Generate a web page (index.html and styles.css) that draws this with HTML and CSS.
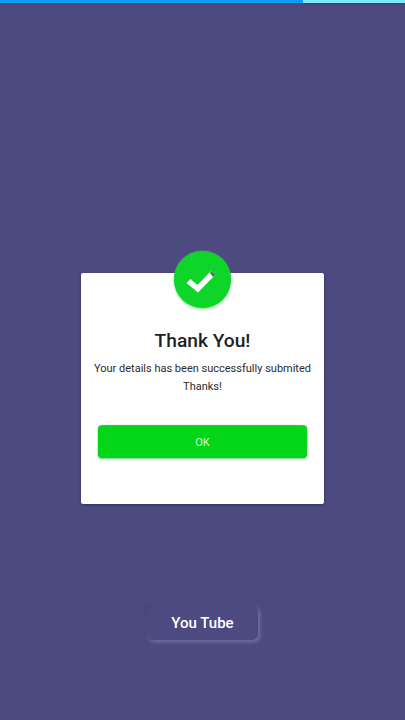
FILE: index.html
```html
<!DOCTYPE html>
<html lang="en">
<head>
<meta charset="utf-8">
<title>Thank You</title>
<link rel="stylesheet" href="styles.css">
</head>
<body>
<div class="progress"><div class="progress-fill"></div></div>
<main class="stage">
  <section class="card">
    <div class="badge">
      <svg class="check" viewBox="0 0 30 24" width="30" height="24" aria-hidden="true">
        <path d="M0.5 13 L4.5 9 L11.5 15 L25 1 L29.5 4.5 L12 22.5 Z" fill="#ffffff"/>
        <path d="M25 1 L29.5 4.5 L27 7 L24 3 Z" fill="#3f7f55"/>
      </svg>
    </div>
    <h1 class="title">Thank You!</h1>
    <p class="message">Your details has been successfully submited<br>Thanks!</p>
    <button class="ok" type="button">OK</button>
  </section>
  <button class="youtube" type="button">You Tube</button>
</main>
</body>
</html>
```
FILE: styles.css
```css
* { box-sizing: border-box; }
html, body { margin: 0; height: 100%; }
body {
  width: 405px;
  height: 720px;
  overflow: hidden;
  background: #4d4a82;
  font-family: Roboto, "Liberation Sans", sans-serif;
  display: flex;
  flex-direction: column;
}
.progress {
  height: 3px;
  flex: none;
  background: #7fe9f5;
  box-shadow: 0 1px 2px rgba(20, 70, 120, 0.5);
}
.progress-fill {
  width: 303px;
  height: 100%;
  background: #0f9ff2;
}
.stage {
  flex: 1;
  display: flex;
  flex-direction: column;
  align-items: center;
  padding-top: 270px;
}
.card {
  position: relative;
  width: 243px;
  height: 231px;
  background: #fff;
  border-radius: 2px;
  box-shadow: 0 1px 3px rgba(30, 30, 40, 0.55);
  padding: 56px 17px 0;
  display: flex;
  flex-direction: column;
  align-items: center;
  color: #1f1f24;
}
.badge {
  position: absolute;
  top: -22px;
  left: 93px;
  width: 57px;
  height: 57px;
  border-radius: 50%;
  background: #0fd52a;
  box-shadow: 0 1px 2px rgba(40, 230, 60, 0.7), 0 -1px 1px rgba(90, 130, 120, 0.6);
  display: flex;
  align-items: center;
  justify-content: center;
}
.check { display: block; margin: 5px 4px 0 0; }
.title {
  margin: 0;
  font-size: 19.2px;
  line-height: 24px;
  font-weight: 500;
  white-space: nowrap;
}
.message {
  margin: 7px 0 0;
  font-size: 11px;
  line-height: 18px;
  text-align: center;
  white-space: nowrap;
  color: #2a2a30;
}
.ok {
  margin-top: 30px;
  width: 209px;
  height: 32px;
  flex: none;
  border: 0;
  border-radius: 4px;
  background: #03d619;
  color: #d8f8da;
  font: 400 11px Roboto, "Liberation Sans", sans-serif;
  box-shadow: 0 1px 2px rgba(60, 200, 90, 0.8), 0 -1px 1px rgba(70, 120, 90, 0.8);
}
.youtube {
  margin-top: 102px;
  width: 111px;
  height: 34px;
  border: 0;
  border-radius: 6px;
  background: #4d4a82;
  color: #fff;
  font: 500 15px Roboto, "Liberation Sans", sans-serif;
  box-shadow: 2px 2px 4px rgba(150, 148, 195, 0.55), -1px -1px 2px rgba(65, 61, 115, 0.6);
}
```
